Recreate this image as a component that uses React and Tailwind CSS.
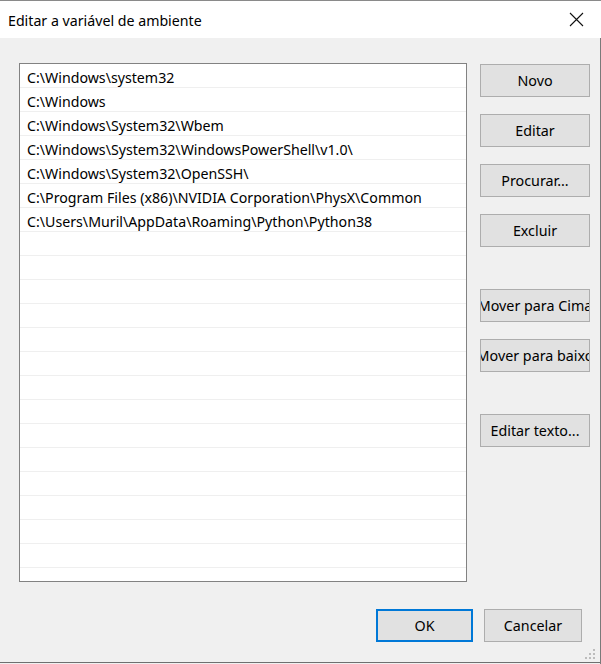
import React from "react";

const paths = [
  "C:\\Windows\\system32",
  "C:\\Windows",
  "C:\\Windows\\System32\\Wbem",
  "C:\\Windows\\System32\\WindowsPowerShell\\v1.0\\",
  "C:\\Windows\\System32\\OpenSSH\\",
  "C:\\Program Files (x86)\\NVIDIA Corporation\\PhysX\\Common",
  "C:\\Users\\Muril\\AppData\\Roaming\\Python\\Python38",
];

const rows = [...paths, ...Array(15).fill("")];

function Btn({ children, className = "" }) {
  return (
    <div
      className={
        "h-[33px] w-[110px] flex items-center justify-center overflow-hidden whitespace-nowrap bg-[#e1e1e1] border border-[#adadad] text-[14.3px] text-black pt-[1px] " +
        className
      }
    >
      {children}
    </div>
  );
}

export default function App() {
  return (
    <div
      className="w-[601px] h-[664px] flex flex-col bg-[#f0f0f0] relative overflow-hidden"
      style={{ fontFamily: '"Noto Sans", "Open Sans", sans-serif' }}
    >
      <div className="h-[38px] bg-white flex items-center justify-between pl-[8px] pr-[16px] border-t border-[#8a8a8a]">
        <span className="text-[14.2px] text-black leading-none pt-[3px]">Editar a variável de ambiente</span>
        <svg width="15" height="15" viewBox="0 0 15 15" className="mr-[1px]">
          <path d="M1 1 L14 14 M14 1 L1 14" stroke="#111" strokeWidth="1.1" fill="none" />
        </svg>
      </div>
      <div className="flex-1 flex flex-col border-r border-[#7a7a7a] pb-[1px]">
        <div className="flex flex-col flex-1 border-b border-[#6f6f6f]">
          <div className="flex pl-[19px] pt-[25px]">
            <div className="w-[448px] h-[519px] bg-white border border-[#828282] overflow-hidden">
              {rows.map((r, i) => (
                <div
                  key={i}
                  className="h-[24px] border-b border-[#efefef] pl-[7px] pt-[4px] flex items-center text-[14.2px] text-black whitespace-nowrap"
                >
                  {r}
                </div>
              ))}
            </div>
            <div className="flex flex-col ml-[13px] pt-[1px]">
              <Btn>Novo</Btn>
              <Btn className="mt-[17px]">Editar</Btn>
              <Btn className="mt-[17px]">Procurar...</Btn>
              <Btn className="mt-[17px]">Excluir</Btn>
              <Btn className="mt-[42px]">Mover para Cima</Btn>
              <Btn className="mt-[17px]">Mover para baixo</Btn>
              <Btn className="mt-[42px]">Editar texto...</Btn>
            </div>
          </div>
          <div className="flex justify-end pr-[18px] pt-[27px] gap-[11px]">
            <div className="h-[33px] w-[97px] flex items-center justify-center bg-[#e1e1e1] border-2 border-[#0078d7] text-[14.3px] text-black pt-[1px]">
              OK
            </div>
            <div className="h-[33px] w-[98px] flex items-center justify-center bg-[#e1e1e1] border border-[#adadad] text-[14.3px] text-black pt-[1px]">
              Cancelar
            </div>
          </div>
        </div>
      </div>
      <svg
        width="12"
        height="12"
        viewBox="0 0 12 12"
        className="absolute right-[4px] bottom-[3px]"
      >
        <g fill="#bcbcbc">
          <rect x="8" y="0" width="2" height="2" />
          <rect x="4" y="4" width="2" height="2" />
          <rect x="8" y="4" width="2" height="2" />
          <rect x="0" y="8" width="2" height="2" />
          <rect x="4" y="8" width="2" height="2" />
          <rect x="8" y="8" width="2" height="2" />
        </g>
      </svg>
    </div>
  );
}
